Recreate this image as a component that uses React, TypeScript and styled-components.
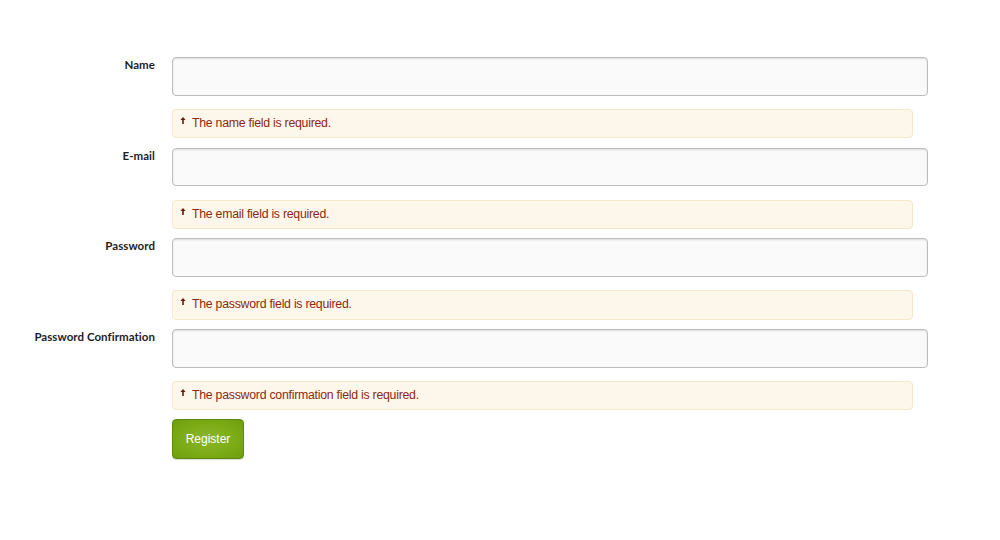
import React from "react";
import styled, { createGlobalStyle } from "styled-components";

const Global = createGlobalStyle`
  html, body { margin: 0; padding: 0; background: #ffffff; }
  body { font-family: "Liberation Sans", Arial, sans-serif; }
`;

const Page = styled.div`
  width: 1000px;
  height: 540px;
  box-sizing: border-box;
  padding-top: 57px;
`;

const Form = styled.form`
  display: grid;
  grid-template-columns: 155px 756px;
  column-gap: 17px;
  margin: 0;
`;

const Label = styled.label`
  grid-column: 1;
  text-align: right;
  font-family: Lato, "Open Sans", sans-serif;
  font-weight: 700;
  font-size: 11.5px;
  line-height: 15px;
  color: #1e1e1e;
  letter-spacing: 0.05px;
`;

const Input = styled.input`
  grid-column: 2;
  box-sizing: border-box;
  width: 756px;
  height: 38.67px;
  margin: 0;
  padding: 0 10px;
  background: #fafafa;
  border: 1px solid #bdbdbd;
  border-radius: 4px;
  box-shadow: inset 0 1px 2px rgba(0, 0, 0, 0.12);
  outline: none;
  font-family: "Liberation Sans", Arial, sans-serif;
  font-size: 13px;
`;

const ErrorBox = styled.div`
  grid-column: 2;
  box-sizing: border-box;
  width: 741px;
  height: 29.33px;
  margin: 13.33px 0 9.33px;
  padding: 0 18px 1px 6px;
  display: flex;
  align-items: center;
  background: #fdf7eb;
  border: 1px solid #f6e8c8;
  border-radius: 4px;
  color: #8b2a10;
  font-size: 12.3px;
  letter-spacing: -0.25px;
  font-family: "Liberation Sans", Arial, sans-serif;
`;

const Arrow = styled.svg`
  width: 6px;
  height: 7px;
  margin: -5px 6px 0 1px;
  flex: none;
`;

const Button = styled.button`
  grid-column: 2;
  justify-self: start;
  width: 72px;
  height: 40px;
  margin-top: -1px;
  border: 1px solid #5a8a10;
  border-radius: 4px;
  background: radial-gradient(ellipse at center, #8cb62c 0%, #7aab14 60%, #6e9e0c 100%);
  box-shadow: 0 1px 1px rgba(0, 0, 0, 0.15);
  color: #ffffff;
  font-family: "Liberation Sans", Arial, sans-serif;
  font-size: 12px;
  cursor: pointer;
`;

const UpArrow = () => (
  <Arrow viewBox="0 0 6 7" aria-hidden="true">
    <path d="M3 0 L5.6 3 L3.8 3 L3.8 7 L2.2 7 L2.2 3 L0.4 3 Z" fill="#6e1a06" />
  </Arrow>
);

const fields = [
  { label: "Name", error: "The name field is required.", type: "text" },
  { label: "E-mail", error: "The email field is required.", type: "email" },
  { label: "Password", error: "The password field is required.", type: "password" },
  {
    label: "Password Confirmation",
    error: "The password confirmation field is required.",
    type: "password",
  },
];

export default function App() {
  return (
    <Page>
      <Global />
      <Form onSubmit={(e) => e.preventDefault()}>
        {fields.map((f) => (
          <React.Fragment key={f.label}>
            <Label>{f.label}</Label>
            <Input type={f.type} />
            <ErrorBox>
              <UpArrow />
              {f.error}
            </ErrorBox>
          </React.Fragment>
        ))}
        <Button type="submit">Register</Button>
      </Form>
    </Page>
  );
}
